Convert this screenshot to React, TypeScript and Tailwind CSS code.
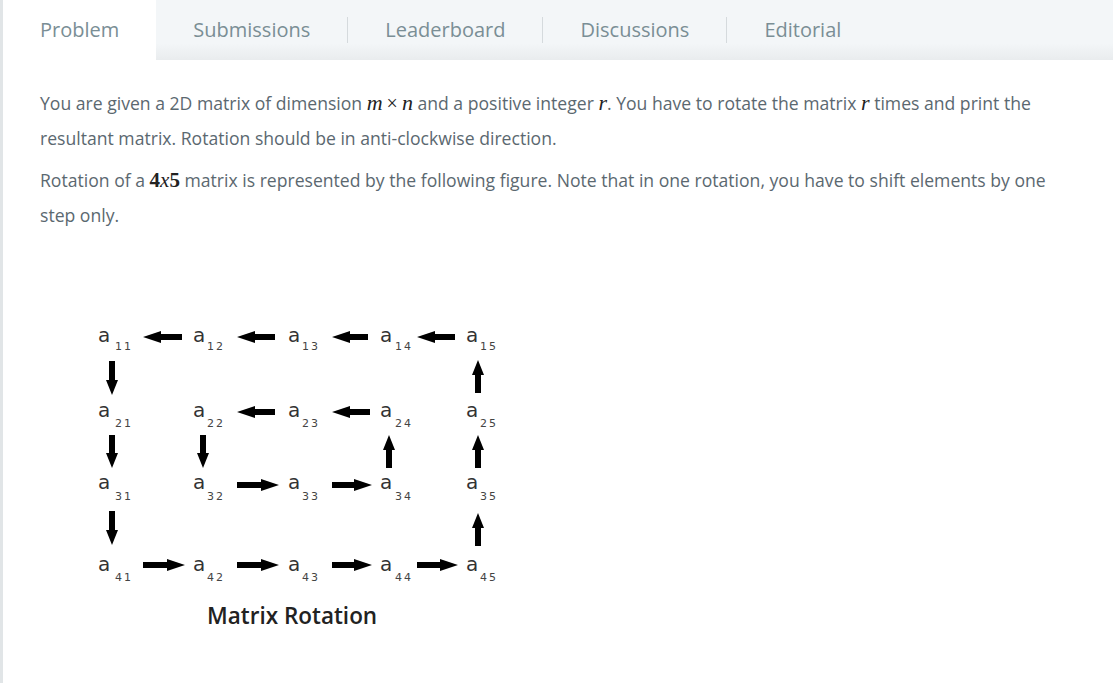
const tabs = ["Submissions", "Leaderboard", "Discussions", "Editorial"];

const colX = [98, 193, 288, 380, 466];
const subX = [115, 207, 302, 395, 480];
const rowY = [339, 414, 486, 568];
const subY = [347, 424, 497, 578];

// tip, tail, y
const hArrows: [number, number, number][] = [
  [143, 182, 334],
  [237, 275, 334],
  [332, 368, 334],
  [417, 455, 334],
  [237, 275, 409],
  [332, 370, 409],
  [279, 237, 482],
  [372, 332, 482],
  [185, 143, 562],
  [279, 237, 562],
  [372, 332, 562],
  [458, 417, 562],
];

// x, tip, tail
const vArrows: [number, number, number][] = [
  [112, 392, 358],
  [112, 465, 432],
  [112, 542, 508],
  [203, 465, 432],
  [478, 357, 390],
  [478, 432, 465],
  [478, 510, 543],
  [389, 432, 465],
];

function hPoints(tip: number, tail: number, y: number) {
  const d = tail > tip ? 1 : -1;
  const h = tip + d * 18;
  return `${tip},${y} ${h},${y - 6} ${h},${y - 3} ${tail},${y - 3} ${tail},${y + 3} ${h},${y + 3} ${h},${y + 6}`;
}

function vPoints(x: number, tip: number, tail: number) {
  const d = tail > tip ? 1 : -1;
  const h = tip + d * 15;
  return `${x},${tip} ${x - 6},${h} ${x - 3},${h} ${x - 3},${tail} ${x + 3},${tail} ${x + 3},${h} ${x + 6},${h}`;
}

function MatrixFigure() {
  return (
    <svg width="520" height="400" viewBox="40 240 520 400" className="block">
      {rowY.map((y, r) =>
        colX.map((x, c) => (
          <g key={`${r}-${c}`}>
            <text x={x} y={y} fontFamily="DejaVu Sans, sans-serif" fontSize="20" fill="#333">
              a
            </text>
            <text x={subX[c]} y={subY[r]} fontFamily="DejaVu Sans, sans-serif" fontSize="11" letterSpacing="2" fill="#444">
              {`${r + 1}${c + 1}`}
            </text>
          </g>
        ))
      )}
      {hArrows.map(([tip, tail, y], i) => (
        <polygon key={`h${i}`} points={hPoints(tip, tail, y)} fill="#000" />
      ))}
      {vArrows.map(([x, tip, tail], i) => (
        <polygon key={`v${i}`} points={vPoints(x, tip, tail)} fill="#000" />
      ))}
      <text x="207" y="621" fontFamily="Open Sans, sans-serif" fontSize="22.5" fontWeight="600" fill="#222">
        Matrix Rotation
      </text>
    </svg>
  );
}

function M({ children }: { children: React.ReactNode }) {
  return <span className="font-['Liberation_Serif',serif] text-[22px] italic text-[#222]">{children}</span>;
}

export default function App() {
  return (
    <div className="min-h-screen border-l-[3px] border-[#e1e5e7] bg-white font-['Open_Sans',sans-serif]">
      <nav className="flex h-[60px] items-center bg-[linear-gradient(to_bottom,#f3f6f8_72%,#e9ecee)] text-[20px] text-[#7a8e95]">
        <div className="flex h-full items-center bg-white pl-[37px] pr-[37px]">Problem</div>
        {tabs.map((t, i) => (
          <div key={t} className="flex items-center">
            {i > 0 && <span className="h-[26px] w-px bg-[#d5dadd]" />}
            <span className="px-[37px]">{t}</span>
          </div>
        ))}
      </nav>

      <main className="pl-[37px] pr-[40px] pt-[25px] text-[17.6px] leading-[35px] text-[#5b6870]">
        <p className="mb-[7px]">
          You are given a 2D matrix of dimension <M>m</M>
          <span className="px-[4px] font-['Liberation_Serif',serif] text-[20px] text-[#222]">×</span>
          <M>n</M> and a positive integer <M>r</M>. You have to rotate the matrix <M>r</M> times and print the resultant matrix. Rotation
          should be in anti-clockwise direction.
        </p>
        <p>
          Rotation of a{" "}
          <span className="font-['Liberation_Serif',serif] text-[21px] text-[#222]">
            <b>4</b>
            <i>x</i>
            <b>5</b>
          </span>{" "}
          matrix is represented by the following figure. Note that in one rotation, you have to shift elements by one step only.
        </p>
        <div className="mt-[10px]">
          <MatrixFigure />
        </div>
      </main>
    </div>
  );
}
